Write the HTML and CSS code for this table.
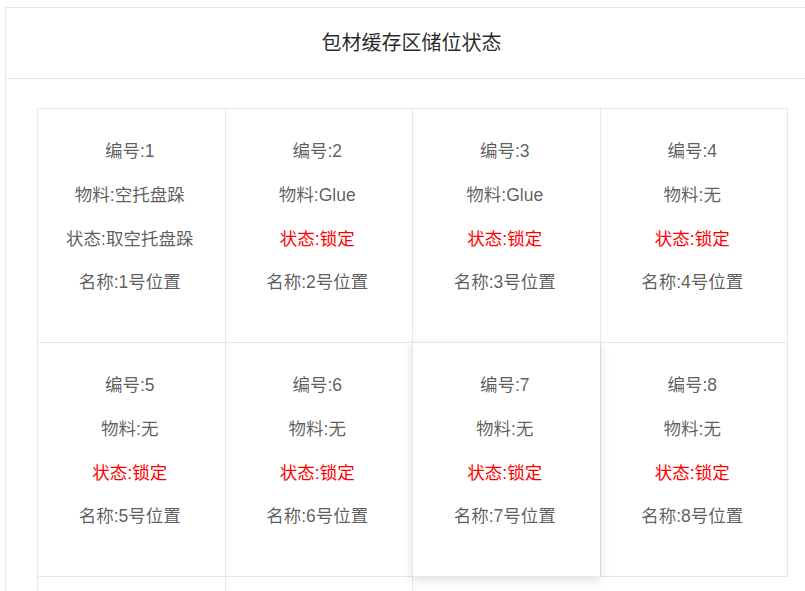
FILE: index.html
```html
<!DOCTYPE html>
<html lang="zh-CN">
<head>
<meta charset="utf-8">
<title>包材缓存区储位状态</title>
<link rel="stylesheet" href="styles.css">
</head>
<body>
<div class="card">
  <div class="card-head">
    <div class="card-title">包材缓存区储位状态</div>
  </div>
  <div class="card-body">
    <div class="grid">
      <div class="cell">
        <p>编号:1</p><p>物料:空托盘跺</p><p>状态:取空托盘跺</p><p>名称:1号位置</p>
      </div>
      <div class="cell">
        <p>编号:2</p><p>物料:Glue</p><p class="locked">状态:锁定</p><p>名称:2号位置</p>
      </div>
      <div class="cell">
        <p>编号:3</p><p>物料:Glue</p><p class="locked">状态:锁定</p><p>名称:3号位置</p>
      </div>
      <div class="cell">
        <p>编号:4</p><p>物料:无</p><p class="locked">状态:锁定</p><p>名称:4号位置</p>
      </div>
      <div class="cell">
        <p>编号:5</p><p>物料:无</p><p class="locked">状态:锁定</p><p>名称:5号位置</p>
      </div>
      <div class="cell">
        <p>编号:6</p><p>物料:无</p><p class="locked">状态:锁定</p><p>名称:6号位置</p>
      </div>
      <div class="cell cell-hover">
        <p>编号:7</p><p>物料:无</p><p class="locked">状态:锁定</p><p>名称:7号位置</p>
      </div>
      <div class="cell">
        <p>编号:8</p><p>物料:无</p><p class="locked">状态:锁定</p><p>名称:8号位置</p>
      </div>
      <div class="cell">
        <p>编号:9</p><p>物料:无</p><p class="locked">状态:锁定</p><p>名称:9号位置</p>
      </div>
      <div class="cell">
        <p>编号:10</p><p>物料:无</p><p class="locked">状态:锁定</p><p>名称:10号位置</p>
      </div>
    </div>
  </div>
</div>
</body>
</html>
```
FILE: styles.css
```css
html, body {
  overflow: hidden;
}
body {
  margin: 7px 0 0 5px;
  background: #fff;
  font-family: "Liberation Sans", "Noto Sans CJK SC", sans-serif;
  color: rgba(0, 0, 0, 0.65);
  font-size: 17.5px;
  line-height: 1.5;
}
.card {
  width: 813px;
  background: #fff;
  border: 1px solid #e8e8e8;
  box-sizing: border-box;
}
.card-head {
  min-height: 60px;
  padding: 0 30px;
  border-bottom: 1px solid #e8e8e8;
}
.card-title {
  padding: 20px 0;
  font-size: 20px;
  line-height: 30px;
  text-align: center;
  color: rgba(0, 0, 0, 0.85);
}
.card-body {
  padding: 29px 30px 30px 31px;
}
.grid {
  display: flex;
  flex-wrap: wrap;
  width: 750px;
}
.cell {
  width: 25%;
  box-sizing: border-box;
  padding: 30px 28px 29px 26px;
  text-align: center;
  box-shadow: 1px 0 0 0 #e8e8e8, 0 1px 0 0 #e8e8e8, 1px 1px 0 0 #e8e8e8, 1px 0 0 0 #e8e8e8 inset, 0 1px 0 0 #e8e8e8 inset;
}
.cell p {
  margin: 0 0 17.5px;
  line-height: 26.25px;
  white-space: nowrap;
}
.cell .locked {
  color: #ff0000;
}
.cell-hover {
  position: relative;
  z-index: 1;
  box-shadow: 0 2.5px 10px rgba(0, 0, 0, 0.15);
}
```
